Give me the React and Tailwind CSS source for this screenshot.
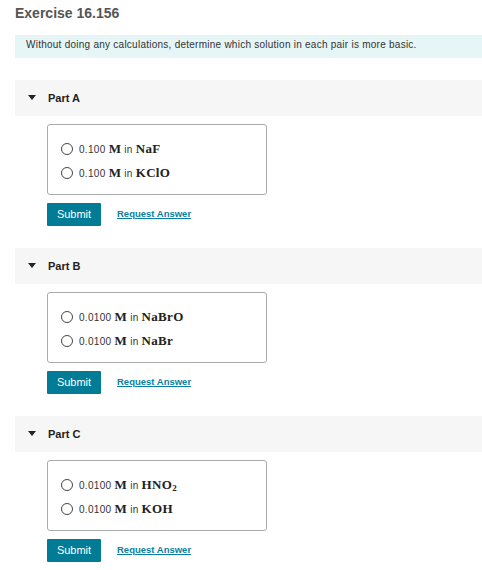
import React from 'react';

const sans = { fontFamily: '"Liberation Sans", Arial, sans-serif' };

function Chem({ children }) {
  return (
    <span className="text-[13px] font-bold text-[#222]" style={{ fontFamily: '"Liberation Serif", "Times New Roman", serif' }}>
      {children}
    </span>
  );
}

function Option({ conc, formula }) {
  return (
    <label className="flex items-center h-[24px]">
      <span className="w-[12px] h-[12px] rounded-full border border-[#444] bg-white shrink-0" />
      <span className="ml-[6px] text-[10px] tracking-[0.3px] text-[#333]">
        {conc} <Chem>M</Chem> in <Chem>{formula}</Chem>
      </span>
    </label>
  );
}

function Part({ label, options }) {
  return (
    <section>
      <div className="h-[36px] bg-[#f6f6f6] flex items-center">
        <svg width="8" height="6" viewBox="0 0 8 6" className="ml-[13px]">
          <path d="M0 0 H8 L4 5 Z" fill="#222" />
        </svg>
        <span className="ml-[12px] text-[11px] font-bold text-[#222]">{label}</span>
      </div>
      <div className="ml-[32px] mt-[8px] w-[220px] h-[71px] border border-[#aaa] rounded-[3px] pl-[13px] pt-[12px]">
        {options.map((o, i) => (
          <Option key={i} conc={o[0]} formula={o[1]} />
        ))}
      </div>
      <div className="ml-[32px] mt-[8px] flex items-center">
        <button className="w-[54px] h-[23px] bg-[#007c97] text-white text-[11px] rounded-[1px]">Submit</button>
        <a href="#" className="ml-[16px] text-[9.5px] font-bold text-[#0a7fa0] underline">Request Answer</a>
      </div>
    </section>
  );
}

export default function App() {
  const parts = [
    { label: 'Part A', options: [['0.100', 'NaF'], ['0.100', 'KClO']] },
    { label: 'Part B', options: [['0.0100', 'NaBrO'], ['0.0100', 'NaBr']] },
    {
      label: 'Part C',
      options: [
        ['0.0100', <>HNO<span className="text-[9px] relative top-[2px]">2</span></>],
        ['0.0100', 'KOH'],
      ],
    },
  ];

  return (
    <div className="bg-white min-h-[570px] pl-[15px] pt-[4px]" style={sans}>
      <h1 className="text-[14px] font-bold text-[#555] leading-[18px]">Exercise 16.156</h1>
      <div className="mt-[13px] h-[23px] bg-[#e6f5f6] pl-[11px] pt-[2px] text-[10px] tracking-[0.25px] text-[#333]">
        Without doing any calculations, determine which solution in each pair is more basic.
      </div>
      <div className="mt-[22px] flex flex-col gap-[22px]">
        {parts.map((p) => (
          <Part key={p.label} label={p.label} options={p.options} />
        ))}
      </div>
    </div>
  );
}
